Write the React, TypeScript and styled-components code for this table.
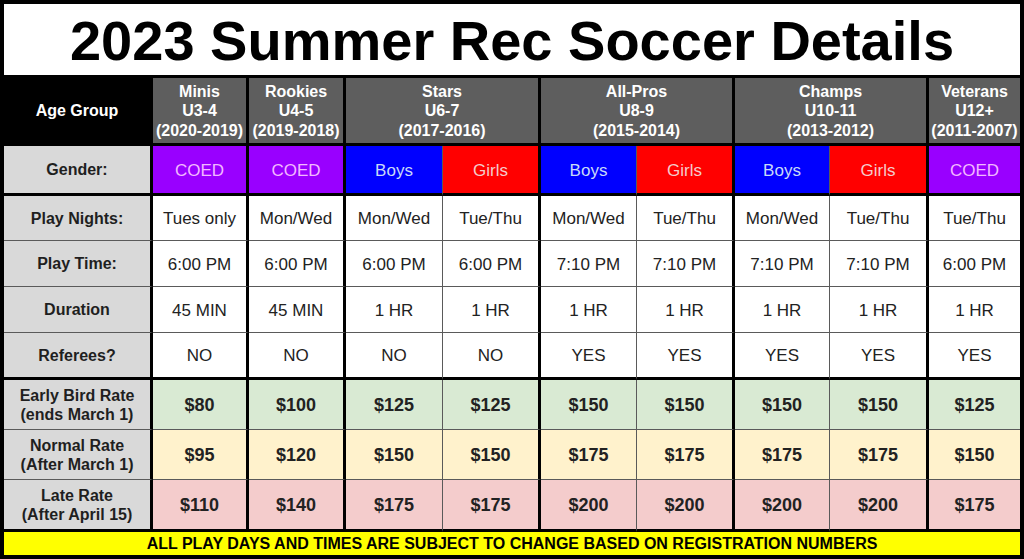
import React from "react";
import styled, { createGlobalStyle, css } from "styled-components";

const GlobalStyle = createGlobalStyle`
  html, body {
    margin: 0;
    padding: 0;
    background: #ffffff;
  }
  body {
    font-family: "Liberation Sans", Arial, sans-serif;
  }
`;

type Line = "thick" | "thin" | "none";

const lineStyle = (line: Line) => {
  if (line === "thick") return "3px solid #000000";
  if (line === "thin") return "1px solid #5a5a5a";
  return "none";
};

// column widths include each cell's right border
const columns = [149, 96, 97, 97, 98, 96, 98, 95, 99, 91];
// row heights include each cell's bottom border
const rowHeights = [74, 68, 50, 45, 46, 46, 47, 50, 50, 52, 23];

const Sheet = styled.div`
  box-sizing: border-box;
  width: 1024px;
  height: 559px;
  border: 4px solid #000000;
  display: grid;
  grid-template-columns: ${columns.map((c) => `${c}px`).join(" ")};
  grid-template-rows: ${rowHeights.map((r) => `${r}px`).join(" ")};
  background: #ffffff;
`;

const Cell = styled.div<{ $right: Line; $bottom: Line; $span?: number }>`
  box-sizing: border-box;
  display: flex;
  align-items: center;
  justify-content: center;
  text-align: center;
  overflow: hidden;
  white-space: nowrap;
  border-right: ${(p) => lineStyle(p.$right)};
  border-bottom: ${(p) => lineStyle(p.$bottom)};
  ${(p) =>
    p.$span &&
    css`
      grid-column: span ${p.$span};
    `}
`;

const TitleCell = styled(Cell)`
  grid-column: 1 / -1;
  font-size: 56px;
  font-weight: 700;
  color: #000000;
  padding-top: 2px;
`;

const AgeGroupCell = styled(Cell)`
  background: #000000;
  color: #ffffff;
  font-size: 16px;
  font-weight: 700;
`;

const GroupCell = styled(Cell)`
  background: #5e5e5e;
  color: #ffffff;
  font-size: 16px;
  font-weight: 700;
  line-height: 19.5px;
  flex-direction: column;
  padding-top: 1px;
`;

const LabelCell = styled(Cell)`
  background: #d9d9d9;
  color: #1f1f1f;
  font-size: 16px;
  font-weight: 700;
  line-height: 18.5px;
  flex-direction: column;
  padding-top: 2px;
`;

const genderColours = {
  COED: { bg: "#9900ff", fg: "#f2b8ff" },
  Boys: { bg: "#0000ff", fg: "#c9daf8" },
  Girls: { bg: "#ff0000", fg: "#f4cccc" },
};

type Gender = keyof typeof genderColours;

const GenderCell = styled(Cell)<{ $gender: Gender }>`
  background: ${(p) => genderColours[p.$gender].bg};
  color: ${(p) => genderColours[p.$gender].fg};
  font-size: 17px;
  padding-top: 2px;
`;

const ValueCell = styled(Cell)`
  background: #ffffff;
  color: #222222;
  font-size: 17px;
  padding-top: 2px;
`;

const PriceCell = styled(Cell)<{ $tint: string }>`
  background: ${(p) => p.$tint};
  color: #222222;
  font-size: 18px;
  font-weight: 700;
  padding-top: 2px;
`;

const FooterCell = styled(Cell)`
  grid-column: 1 / -1;
  background: #ffff00;
  color: #000000;
  font-size: 16px;
  font-weight: 700;
  padding-top: 1px;
`;

const groups = [
  { name: "Minis", age: "U3-4", years: "(2020-2019)", span: 1 },
  { name: "Rookies", age: "U4-5", years: "(2019-2018)", span: 1 },
  { name: "Stars", age: "U6-7", years: "(2017-2016)", span: 2 },
  { name: "All-Pros", age: "U8-9", years: "(2015-2014)", span: 2 },
  { name: "Champs", age: "U10-11", years: "(2013-2012)", span: 2 },
  { name: "Veterans", age: "U12+", years: "(2011-2007)", span: 1 },
];

const genders: Gender[] = [
  "COED",
  "COED",
  "Boys",
  "Girls",
  "Boys",
  "Girls",
  "Boys",
  "Girls",
  "COED",
];

const detailRows: { label: string; values: string[]; bottom: Line }[] = [
  {
    label: "Play Nights:",
    values: ["Tues only", "Mon/Wed", "Mon/Wed", "Tue/Thu", "Mon/Wed", "Tue/Thu", "Mon/Wed", "Tue/Thu", "Tue/Thu"],
    bottom: "thin",
  },
  {
    label: "Play Time:",
    values: ["6:00 PM", "6:00 PM", "6:00 PM", "6:00 PM", "7:10 PM", "7:10 PM", "7:10 PM", "7:10 PM", "6:00 PM"],
    bottom: "thin",
  },
  {
    label: "Duration",
    values: ["45 MIN", "45 MIN", "1 HR", "1 HR", "1 HR", "1 HR", "1 HR", "1 HR", "1 HR"],
    bottom: "thin",
  },
  {
    label: "Referees?",
    values: ["NO", "NO", "NO", "NO", "YES", "YES", "YES", "YES", "YES"],
    bottom: "thick",
  },
];

const rateRows: { label: string; note: string; tint: string; prices: number[]; bottom: Line }[] = [
  {
    label: "Early Bird Rate",
    note: "(ends March 1)",
    tint: "#d9ead3",
    prices: [80, 100, 125, 125, 150, 150, 150, 150, 125],
    bottom: "thin",
  },
  {
    label: "Normal Rate",
    note: "(After March 1)",
    tint: "#fff2cc",
    prices: [95, 120, 150, 150, 175, 175, 175, 175, 150],
    bottom: "thin",
  },
  {
    label: "Late Rate",
    note: "(After April 15)",
    tint: "#f4cccc",
    prices: [110, 140, 175, 175, 200, 200, 200, 200, 175],
    bottom: "thick",
  },
];

// right-hand line of data column i (0-based, label column excluded)
const rightLine = (i: number): Line => {
  if (i === 8) return "none";
  if (i === 2 || i === 4 || i === 6) return "thin";
  return "thick";
};

const App: React.FC = () => {
  let groupEnd = 0;

  return (
    <>
      <GlobalStyle />
      <Sheet>
        <TitleCell $right="none" $bottom="thick">
          2023 Summer Rec Soccer Details
        </TitleCell>

        <AgeGroupCell $right="thick" $bottom="thick">
          Age Group
        </AgeGroupCell>
        {groups.map((g) => {
          groupEnd += g.span;
          return (
            <GroupCell
              key={g.name}
              $span={g.span}
              $right={groupEnd === 9 ? "none" : "thick"}
              $bottom="thick"
            >
              <span>{g.name}</span>
              <span>{g.age}</span>
              <span>{g.years}</span>
            </GroupCell>
          );
        })}

        <LabelCell $right="thick" $bottom="thick">
          Gender:
        </LabelCell>
        {genders.map((g, i) => (
          <GenderCell key={i} $gender={g} $right={rightLine(i)} $bottom="thick">
            {g}
          </GenderCell>
        ))}

        {detailRows.map((row) => (
          <React.Fragment key={row.label}>
            <LabelCell $right="thick" $bottom={row.bottom}>
              {row.label}
            </LabelCell>
            {row.values.map((v, i) => (
              <ValueCell key={i} $right={rightLine(i)} $bottom={row.bottom}>
                {v}
              </ValueCell>
            ))}
          </React.Fragment>
        ))}

        {rateRows.map((row) => (
          <React.Fragment key={row.label}>
            <LabelCell $right="thick" $bottom={row.bottom}>
              <span>{row.label}</span>
              <span>{row.note}</span>
            </LabelCell>
            {row.prices.map((p, i) => (
              <PriceCell
                key={i}
                $tint={row.tint}
                $right={rightLine(i)}
                $bottom={row.bottom}
              >
                ${p}
              </PriceCell>
            ))}
          </React.Fragment>
        ))}

        <FooterCell $right="none" $bottom="none">
          ALL PLAY DAYS AND TIMES ARE SUBJECT TO CHANGE BASED ON REGISTRATION NUMBERS
        </FooterCell>
      </Sheet>
    </>
  );
};

export default App;
